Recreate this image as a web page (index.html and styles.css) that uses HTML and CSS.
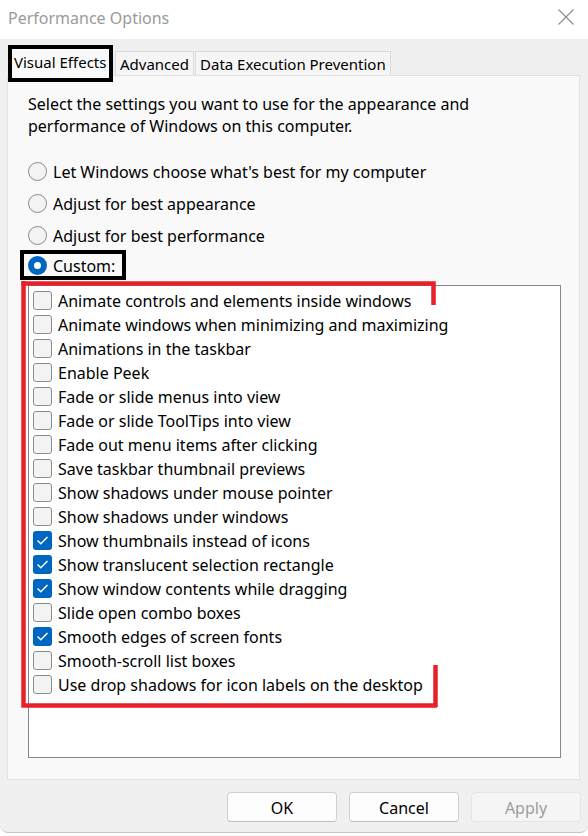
FILE: index.html
```html
<!DOCTYPE html>
<html>
<head>
<meta charset="utf-8">
<link rel="stylesheet" href="styles.css">
</head>
<body>
<div class="window">
  <div class="titlebar">
    <span class="title">Performance Options</span>
    <svg class="close" width="16" height="16" viewBox="0 0 16 16"><path d="M0.5 0.5L15.5 15.5M15.5 0.5L0.5 15.5" stroke="#8a8a8a" stroke-width="1.1" fill="none"/></svg>
  </div>
  <div class="tabs">
    <div class="tab selected">Visual Effects</div>
    <div class="tab">Advanced</div>
    <div class="tab">Data Execution Prevention</div>
  </div>
  <div class="panel">
    <p class="desc">Select the settings you want to use for the appearance and performance of Windows on this computer.</p>
    <div class="radios">
      <div class="radio-row"><span class="radio"></span><span class="lbl">Let Windows choose what's best for my computer</span></div>
      <div class="radio-row"><span class="radio"></span><span class="lbl">Adjust for best appearance</span></div>
      <div class="radio-row"><span class="radio"></span><span class="lbl">Adjust for best performance</span></div>
      <div class="radio-row custom"><span class="radio on"></span><span class="lbl">Custom:</span></div>
    </div>
    <div class="list-wrap">
      <div class="list">
        <div class="item"><span class="cb"></span><span class="lbl">Animate controls and elements inside windows</span></div>
        <div class="item"><span class="cb"></span><span class="lbl">Animate windows when minimizing and maximizing</span></div>
        <div class="item"><span class="cb"></span><span class="lbl">Animations in the taskbar</span></div>
        <div class="item"><span class="cb"></span><span class="lbl">Enable Peek</span></div>
        <div class="item"><span class="cb"></span><span class="lbl">Fade or slide menus into view</span></div>
        <div class="item"><span class="cb"></span><span class="lbl">Fade or slide ToolTips into view</span></div>
        <div class="item"><span class="cb"></span><span class="lbl">Fade out menu items after clicking</span></div>
        <div class="item"><span class="cb"></span><span class="lbl">Save taskbar thumbnail previews</span></div>
        <div class="item"><span class="cb"></span><span class="lbl">Show shadows under mouse pointer</span></div>
        <div class="item"><span class="cb"></span><span class="lbl">Show shadows under windows</span></div>
        <div class="item"><span class="cb on"><svg width="19" height="19" viewBox="0 0 19 19"><path d="M4.5 9.5L7.8 12.8L14.5 6" stroke="#fff" stroke-width="1.4" fill="none"/></svg></span><span class="lbl">Show thumbnails instead of icons</span></div>
        <div class="item"><span class="cb on"><svg width="19" height="19" viewBox="0 0 19 19"><path d="M4.5 9.5L7.8 12.8L14.5 6" stroke="#fff" stroke-width="1.4" fill="none"/></svg></span><span class="lbl">Show translucent selection rectangle</span></div>
        <div class="item"><span class="cb on"><svg width="19" height="19" viewBox="0 0 19 19"><path d="M4.5 9.5L7.8 12.8L14.5 6" stroke="#fff" stroke-width="1.4" fill="none"/></svg></span><span class="lbl">Show window contents while dragging</span></div>
        <div class="item"><span class="cb"></span><span class="lbl">Slide open combo boxes</span></div>
        <div class="item"><span class="cb on"><svg width="19" height="19" viewBox="0 0 19 19"><path d="M4.5 9.5L7.8 12.8L14.5 6" stroke="#fff" stroke-width="1.4" fill="none"/></svg></span><span class="lbl">Smooth edges of screen fonts</span></div>
        <div class="item"><span class="cb"></span><span class="lbl">Smooth-scroll list boxes</span></div>
        <div class="item"><span class="cb"></span><span class="lbl">Use drop shadows for icon labels on the desktop</span></div>
      </div>
      <svg class="red-mark" width="422" height="430" viewBox="0 0 422 430">
        <path d="M3.5 2 V426.5 H417" stroke="#e8202a" stroke-width="4.5" fill="none"/>
        <path d="M1.5 4.5 H413.5 V26" stroke="#e8202a" stroke-width="4.5" fill="none"/>
        <path d="M415.5 386 V428" stroke="#e8202a" stroke-width="4.5" fill="none"/>
      </svg>
    </div>
  </div>
  <div class="buttons">
    <div class="btn">OK</div>
    <div class="btn">Cancel</div>
    <div class="btn disabled">Apply</div>
  </div>
</div>
</body>
</html>
```
FILE: styles.css
```css
html, body {
  margin: 0;
  padding: 0;
  background: #ffffff;
}
body {
  width: 588px;
  height: 836px;
  overflow: hidden;
  font-family: "Noto Sans", "Open Sans", sans-serif;
  font-size: 16px;
  color: #000;
}
.window {
  height: 833px;
  box-sizing: border-box;
  background: #f0f0f0;
  border-bottom: 1px solid #c8c8c8;
  border-radius: 0 0 8px 8px;
}
.titlebar {
  height: 39px;
  background: #ffffff;
  display: flex;
  align-items: center;
  justify-content: space-between;
  padding: 0 14px 0 8px;
  box-sizing: border-box;
}
.title {
  color: #9a9a9a;
  font-size: 16px;
  margin-top: -4px;
}
.close {
  margin-top: -5px;
}
.tabs {
  display: flex;
  align-items: flex-end;
  height: 30px;
  margin-top: 6px;
  padding-left: 8px;
  font-size: 15px;
}
.tab {
  height: 24px;
  box-sizing: border-box;
  border: 1px solid #dadada;
  border-bottom: none;
  background: #f5f5f5;
  padding: 1px 4px 0;
  line-height: 23px;
  margin-right: 1px;
  white-space: nowrap;
}
.tab.selected {
  align-self: flex-start;
  height: 37px;
  width: 105px;
  border: 4px solid #000;
  background: #f9f9f9;
  line-height: 26px;
  padding: 0 0 0 2px;
  position: relative;
  z-index: 1;
  margin-right: 2px;
}
.panel {
  margin: 0 8px 0 7px;
  height: 705px;
  box-sizing: border-box;
  border: 1px solid #e3e3e3;
  background: #f9f9f9;
  padding: 17px 0 0 20px;
}
.desc {
  margin: 0;
  line-height: 22px;
  width: 460px;
}
.radios {
  margin-top: 18px;
}
.radio-row {
  display: flex;
  align-items: center;
  height: 32px;
}
.lbl {
  margin-top: 2px;
  white-space: nowrap;
}
.radio {
  width: 19px;
  height: 19px;
  box-sizing: border-box;
  border-radius: 50%;
  border: 1px solid #8c8c8c;
  background: #f3f3f3;
  margin-right: 6px;
  flex: none;
}
.radio.on {
  border: 6px solid #0067c0;
  background: #ffffff;
}
.radio-row.custom {
  width: 106px;
  height: 30px;
  margin-left: -8px;
  padding-left: 4px;
  box-sizing: border-box;
  border: 4px solid #000;
  margin-top: -1px;
}
.list-wrap {
  position: relative;
  margin-top: 5px;
}
.list {
  width: 533px;
  height: 473px;
  box-sizing: border-box;
  border: 1px solid #828790;
  background: #ffffff;
  padding: 2px 0 0 4px;
}
.item {
  display: flex;
  align-items: center;
  height: 24px;
}
.cb {
  width: 19px;
  height: 19px;
  box-sizing: border-box;
  border: 1px solid #8c8c8c;
  border-radius: 3px;
  background: #f3f3f3;
  margin-right: 6px;
  flex: none;
  display: flex;
}
.cb.on {
  border: none;
  background: #0067c0;
}
.red-mark {
  position: absolute;
  left: -8px;
  top: -6px;
}
.buttons {
  display: flex;
  justify-content: flex-end;
  gap: 12px;
  padding-right: 7px;
  margin-top: 12px;
}
.btn {
  width: 110px;
  height: 30px;
  box-sizing: border-box;
  border: 1px solid #d0d0d0;
  border-bottom-color: #bdbdbd;
  border-radius: 4px;
  background: #fdfdfd;
  text-align: center;
  line-height: 30px;
}
.btn.disabled {
  background: #f5f5f5;
  border-color: #e5e5e5;
  color: #9d9d9d;
}
```
